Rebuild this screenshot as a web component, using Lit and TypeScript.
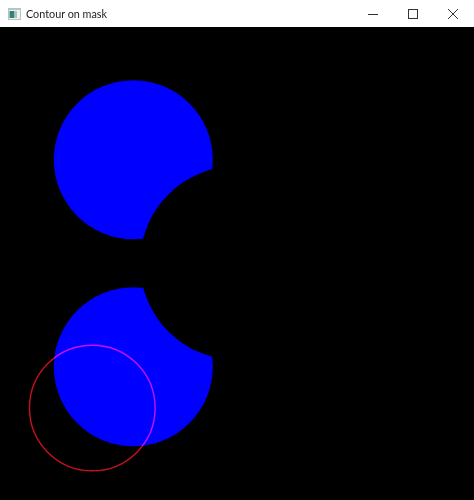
import { LitElement, html, css } from "lit";
import { customElement } from "lit/decorators.js";

@customElement("app-root")
export class AppRoot extends LitElement {
  static styles = css`
    :host { display: block; width: 474px; height: 500px; background: #000; overflow: hidden; }
    .titlebar { display: flex; align-items: center; height: 27px; background: #fff; }
    .app-icon { display: block; margin-left: 8px; flex: none; }
    .title { margin-left: 5px; flex: 1; font: 10.8px "Lato", "Noto Sans", sans-serif; color: #222; white-space: nowrap; }
    .controls { display: flex; padding-right: 1px; }
    .btn { width: 40px; height: 27px; display: flex; align-items: center; justify-content: center; }
    .btn svg { display: block; }
    .canvas { display: block; width: 474px; height: 473px; background: #000; }
    .contour { mix-blend-mode: screen; }
  `;

  render() {
    return html`
      <div class="titlebar">
        <svg class="app-icon" width="13" height="12" viewBox="0 0 13 12">
          <rect x="0" y="0" width="13" height="12" fill="#b9c4c2"></rect>
          <rect x="1" y="2" width="11" height="9" fill="#eef1f0"></rect>
          <rect x="1.5" y="3" width="5" height="7" fill="#35807a"></rect>
          <rect x="6.5" y="3" width="2.5" height="7" fill="#9fcabf"></rect>
        </svg>
        <span class="title">Contour on mask</span>
        <div class="controls">
          <div class="btn"><svg width="10" height="10" viewBox="0 0 10 10"><path d="M0 5.5H10" stroke="#333" fill="none"></path></svg></div>
          <div class="btn"><svg width="10" height="10" viewBox="0 0 10 10"><rect x="0.5" y="0.5" width="9" height="9" stroke="#333" fill="none"></rect></svg></div>
          <div class="btn"><svg width="10" height="10" viewBox="0 0 10 10"><path d="M0 0L10 10M10 0L0 10" stroke="#333" fill="none"></path></svg></div>
        </div>
      </div>
      <svg class="canvas" viewBox="0 27 474 473">
        <circle cx="133.3" cy="159.7" r="79.5" fill="#0000ff"></circle>
        <circle cx="133.3" cy="366.8" r="79.5" fill="#0000ff"></circle>
        <circle cx="237" cy="263" r="97" fill="#000"></circle>
        <circle class="contour" cx="92.3" cy="408" r="62.8" fill="none" stroke="#c8101c" stroke-width="1.4"></circle>
      </svg>
    `;
  }
}
